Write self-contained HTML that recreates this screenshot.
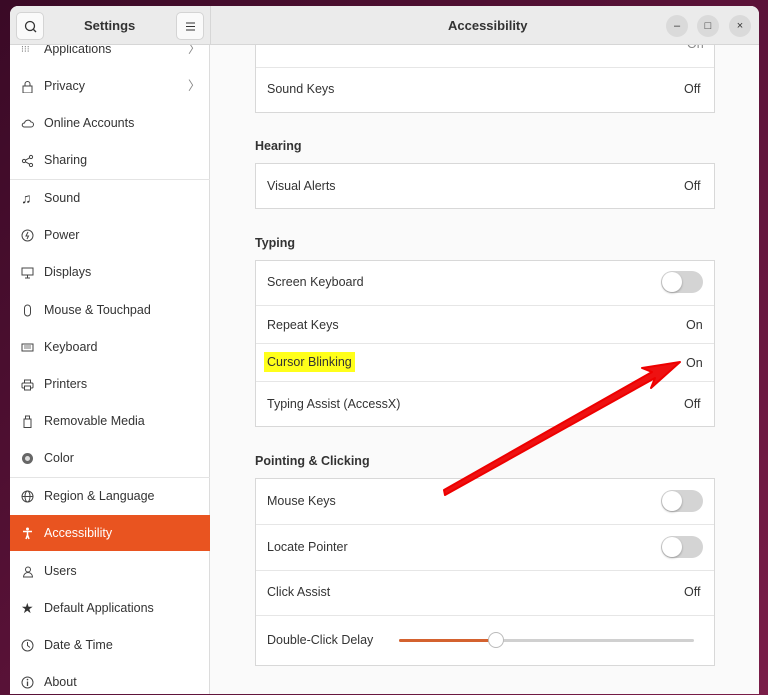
<!DOCTYPE html><html><head><meta charset="utf-8"><style>
*{margin:0;padding:0;box-sizing:border-box}
body{width:768px;height:695px;overflow:hidden;background:linear-gradient(135deg,#3a0a26,#5a1238 50%,#7a1d48);font-family:"Liberation Sans",sans-serif;font-size:12.5px;color:#333;position:relative}
.win{position:absolute;left:10px;top:6px;width:749px;height:688px;background:#fafafa;border-radius:8px 8px 0 0;overflow:hidden}
.hdr{position:absolute;left:0;top:0;width:749px;height:39px;background:#ebebeb;border-bottom:1px solid #d6d6d6;z-index:2}
.side{position:absolute;left:0;top:39px;width:200px;height:660px;background:#fff;border-right:1px solid #dcdcdc}
.it{position:absolute;left:0;width:200px;height:37px;line-height:37px;padding-left:34px;color:#333}
.ic{position:absolute;left:11px;top:12px;width:13px;height:13px}
.sep{position:absolute;left:0;width:200px;height:1px;background:#e4e4e4}
.t{position:absolute;font-size:12.5px;color:#333}
.h{position:absolute;font-weight:bold;font-size:12.5px;color:#333}
.p{position:absolute;left:245px;width:460px;background:#fff;border:1px solid #d8d8d8}
.ln{position:absolute;left:0;right:0;height:1px;background:#e6e6e6}
.sw{position:absolute;left:405px;width:42px;height:22px;border-radius:11px;background:#d4d4d4}
.sw::after{content:"";position:absolute;left:1px;top:1px;width:20px;height:20px;border-radius:50%;background:#fff;box-shadow:0 1px 2px rgba(0,0,0,.3)}
.btn{position:absolute;width:28px;height:28px;border-radius:5px;background:#fafafa;border:1px solid #d4d4d4;top:6px}
.wc{position:absolute;top:9px;width:22px;height:22px;border-radius:50%;background:#dadada;text-align:center;line-height:22px;font-size:11px;color:#333}
</style></head><body>
<div class="win">
<div class="hdr">
<div class="btn" style="left:6px"><svg width="28" height="28"><circle cx="13" cy="13" r="4.5" fill="none" stroke="#333" stroke-width="1.3"/><line x1="16.5" y1="16.5" x2="19" y2="19" stroke="#333" stroke-width="1.3"/></svg></div>
<div style="position:absolute;left:74px;top:12px;font-weight:bold;font-size:13px;color:#333">Settings</div>
<div class="btn" style="left:166px"><svg width="28" height="28"><path d="M9 10h9M9 13.5h9M9 17h9" stroke="#333" stroke-width="1.1"/></svg></div>
<div style="position:absolute;left:200px;top:0;width:1px;height:39px;background:#d6d6d6"></div>
<div style="position:absolute;left:438px;top:12px;font-weight:bold;font-size:13px;color:#333">Accessibility</div>
<div class="wc" style="left:656px">–</div>
<div class="wc" style="left:687px">□</div>
<div class="wc" style="left:719px">×</div>
</div>
<div class="side">
<div class="it" style="top:-14px">Applications<span style="position:absolute;left:178px;color:#888">〉</span><span class="ic" style="top:14px;font-size:9px;color:#666;line-height:9px">⁝⁝⁝</span></div>
<div class="it" style="top:23px">Privacy<span style="position:absolute;left:178px;color:#888">〉</span><svg class="ic" viewBox="0 0 13 13"><rect x="2" y="6" width="9" height="7" fill="none" stroke="#444"/><path d="M4 6V4a2.5 2.5 0 0 1 5 0v2" fill="none" stroke="#444"/></svg></div>
<div class="it" style="top:60px">Online Accounts<svg class="ic" viewBox="0 0 13 13"><path d="M3 10h7a2.5 2.5 0 0 0 0-5 3.5 3.5 0 0 0-6.5 1A2 2 0 0 0 3 10z" fill="none" stroke="#444"/></svg></div>
<div class="it" style="top:97px">Sharing<svg class="ic" viewBox="0 0 13 13"><circle cx="3" cy="7" r="1.6" fill="none" stroke="#444"/><circle cx="10" cy="3" r="1.6" fill="none" stroke="#444"/><circle cx="10" cy="11" r="1.6" fill="none" stroke="#444"/><path d="M4.4 6.2 8.6 3.8M4.4 7.8l4.2 2.4" stroke="#444"/></svg></div>
<div class="sep" style="top:134px"></div>
<div class="it" style="top:135px">Sound<span class="ic" style="top:0;font-size:14px">♫</span></div>
<div class="it" style="top:172px">Power<svg class="ic" viewBox="0 0 13 13"><circle cx="6.5" cy="6.5" r="5.5" fill="none" stroke="#444"/><path d="M7 3 5 7h2.5L6 10" fill="none" stroke="#444"/></svg></div>
<div class="it" style="top:209px">Displays<svg class="ic" viewBox="0 0 13 13"><rect x="1" y="2" width="11" height="7" fill="none" stroke="#444"/><path d="M4 12h5M6.5 9v3" stroke="#444"/></svg></div>
<div class="it" style="top:247px">Mouse &amp; Touchpad<svg class="ic" viewBox="0 0 13 13"><rect x="3.5" y="1" width="6" height="11" rx="3" fill="none" stroke="#444"/></svg></div>
<div class="it" style="top:284px">Keyboard<svg class="ic" viewBox="0 0 13 13"><rect x="1" y="3" width="11" height="7" fill="none" stroke="#444"/><path d="M3 5h7M3 7h7" stroke="#777"/></svg></div>
<div class="it" style="top:321px">Printers<svg class="ic" viewBox="0 0 13 13"><rect x="1" y="5" width="11" height="5" rx="1" fill="none" stroke="#444"/><rect x="3.5" y="2" width="6" height="3" fill="none" stroke="#444"/><rect x="3.5" y="8" width="6" height="4" fill="#fff" stroke="#444"/></svg></div>
<div class="it" style="top:358px">Removable Media<svg class="ic" viewBox="0 0 13 13"><rect x="3" y="4" width="7" height="8.5" fill="none" stroke="#444"/><rect x="4.5" y="1" width="4" height="3" fill="none" stroke="#444"/></svg></div>
<div class="it" style="top:395px">Color<svg class="ic" viewBox="0 0 13 13"><circle cx="6.5" cy="6.5" r="5.5" fill="#666"/><circle cx="6.5" cy="6.5" r="2.5" fill="#ddd"/></svg></div>
<div class="sep" style="top:432px"></div>
<div class="it" style="top:433px">Region &amp; Language<svg class="ic" viewBox="0 0 13 13"><circle cx="6.5" cy="6.5" r="5.5" fill="none" stroke="#444"/><ellipse cx="6.5" cy="6.5" rx="2.5" ry="5.5" fill="none" stroke="#444"/><path d="M1 6.5h11" stroke="#444"/></svg></div>
<div class="it" style="top:470px;height:36px;background:#e95420;color:#fff">Accessibility<svg class="ic" viewBox="0 0 13 13"><circle cx="6.5" cy="2" r="1.5" fill="#fff"/><path d="M2 4.5h9M6.5 4.5v3.5M5 12l1.5-4 1.5 4" stroke="#fff" stroke-width="1.5" fill="none"/></svg></div>
<div class="it" style="top:508px">Users<svg class="ic" viewBox="0 0 13 13"><circle cx="7" cy="4.5" r="2.5" fill="none" stroke="#444"/><path d="M2.5 12a4.5 4.5 0 0 1 9 0z" fill="none" stroke="#444"/></svg></div>
<div class="it" style="top:545px">Default Applications<span class="ic" style="top:0;font-size:14px">★</span></div>
<div class="it" style="top:582px">Date &amp; Time<svg class="ic" viewBox="0 0 13 13"><circle cx="6.5" cy="6.5" r="5.5" fill="none" stroke="#444"/><path d="M6.5 3v3.5l2.5 2" fill="none" stroke="#444"/></svg></div>
<div class="it" style="top:619px">About<svg class="ic" viewBox="0 0 13 13"><circle cx="6.5" cy="6.5" r="5.5" fill="none" stroke="#444"/><path d="M6.5 5.5v4.5" stroke="#444" stroke-width="1.3"/><circle cx="6.5" cy="3.6" r=".8" fill="#444"/></svg></div>
</div>
<div class="p" style="top:20px;height:87px"><div class="ln" style="top:40px"></div>
<span class="t" style="left:11px;top:55px">Sound Keys</span><span class="t" style="left:428px;top:55px">Off</span>
<span class="t" style="left:431px;top:10px;color:#888">On</span></div>
<div class="h" style="left:245px;top:133px">Hearing</div>
<div class="p" style="top:157px;height:46px"><span class="t" style="left:11px;top:15px">Visual Alerts</span><span class="t" style="left:428px;top:15px">Off</span></div>
<div class="h" style="left:245px;top:230px">Typing</div>
<div class="p" style="top:254px;height:167px">
<span class="t" style="left:11px;top:14px">Screen Keyboard</span><div class="sw" style="top:10px"></div>
<div class="ln" style="top:44px"></div>
<span class="t" style="left:11px;top:57px">Repeat Keys</span><span class="t" style="left:430px;top:57px">On</span>
<div class="ln" style="top:82px"></div>
<span class="t" style="left:8px;top:91px;background:#ffff1a;padding:3px 3px">Cursor Blinking</span><span class="t" style="left:430px;top:95px">On</span>
<div class="ln" style="top:120px"></div>
<span class="t" style="left:11px;top:136px">Typing Assist (AccessX)</span><span class="t" style="left:428px;top:136px">Off</span></div>
<div class="h" style="left:245px;top:448px">Pointing &amp; Clicking</div>
<div class="p" style="top:472px;height:188px">
<span class="t" style="left:11px;top:15px">Mouse Keys</span><div class="sw" style="top:11px"></div>
<div class="ln" style="top:45px"></div>
<span class="t" style="left:11px;top:61px">Locate Pointer</span><div class="sw" style="top:57px"></div>
<div class="ln" style="top:91px"></div>
<span class="t" style="left:11px;top:106px">Click Assist</span><span class="t" style="left:428px;top:106px">Off</span>
<div class="ln" style="top:136px"></div>
<span class="t" style="left:11px;top:154px">Double-Click Delay</span>
<div style="position:absolute;left:143px;top:160px;width:295px;height:3px;background:#d0d0d0;border-radius:2px"></div>
<div style="position:absolute;left:143px;top:160px;width:97px;height:3px;background:#d4622f;border-radius:2px"></div>
<div style="position:absolute;left:232px;top:153px;width:16px;height:16px;border-radius:50%;background:#fff;border:1px solid #bbb"></div>
</div>
</div>
<svg style="position:absolute;left:0;top:0" width="768" height="695"><path d="M445 495 L655 378 L651 388 L680 362 L642 368 L652 372 L444 490 Z" fill="#ee1111" stroke="#e00" stroke-width="2" stroke-linejoin="round"/></svg>
</body></html>
